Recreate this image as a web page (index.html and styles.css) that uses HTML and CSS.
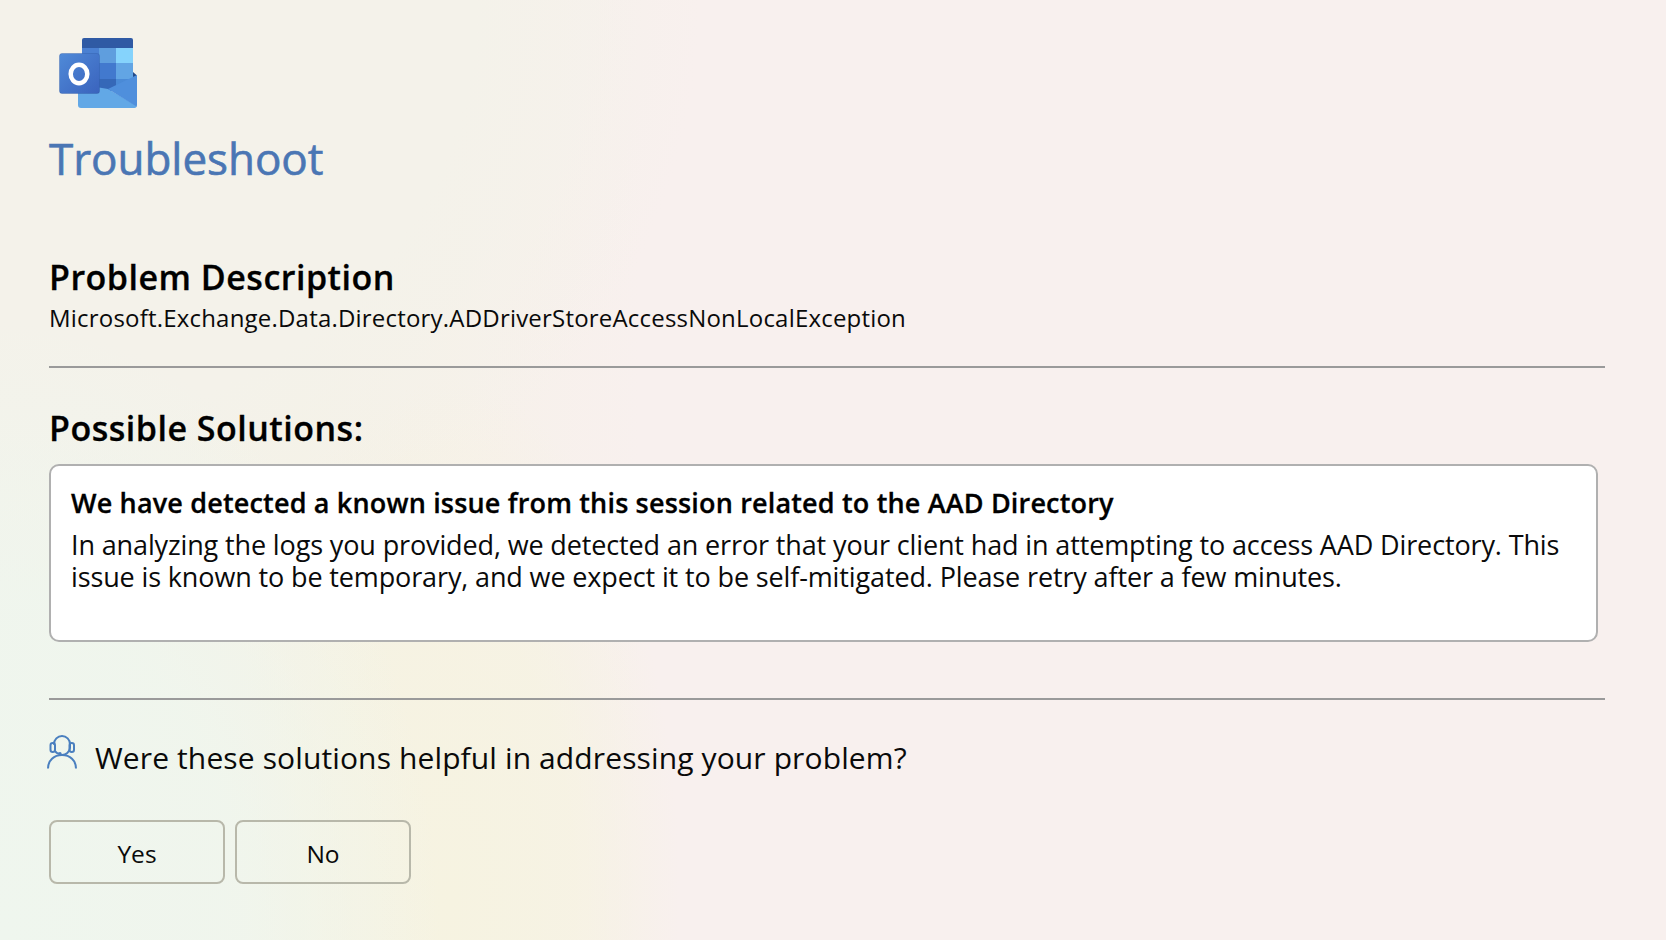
FILE: index.html
```html
<!DOCTYPE html>
<html lang="en">
<head>
<meta charset="utf-8">
<title>Troubleshoot</title>
<link rel="stylesheet" href="styles.css">
</head>
<body>
<main class="page">
  <svg class="logo" viewBox="0 0 78 70" width="78" height="70" aria-hidden="true">
    <defs>
      <linearGradient id="og" x1="0" y1="0" x2="1" y2="1"><stop offset="0" stop-color="#4f8ad8"/><stop offset="1" stop-color="#3a63bd"/></linearGradient>
    </defs>
    <path d="M23 2a2 2 0 0 1 2-2h47a2 2 0 0 1 2 2v8H23z" fill="#2f5aa4"/>
    <rect x="23" y="10" width="17" height="15" fill="#4a80d2"/>
    <rect x="40" y="10" width="17" height="15" fill="#5f9ede"/>
    <rect x="57" y="10" width="17" height="15" fill="#85d3fc"/>
    <rect x="23" y="25" width="17" height="16" fill="#3a70c4"/>
    <rect x="40" y="25" width="17" height="16" fill="#4279ce"/>
    <rect x="57" y="25" width="17" height="16" fill="#62a5e4"/>
    <rect x="23" y="41" width="17" height="12" fill="#2f60ae"/>
    <rect x="40" y="41" width="17" height="12" fill="#3568b8"/>
    <rect x="57" y="41" width="17" height="12" fill="#4a8ad6"/>
    <path d="M74 34l4 3.500-4 2.500z" fill="#234a88"/>
    <path d="M19 46v21a3 3 0 0 0 3 3h53a3 3 0 0 0 3-2L49 51z" fill="#62a8e6"/>
    <path d="M78 37v30a3 3 0 0 1-.5 1.500L49 51z" fill="#4f8fdc"/>
    <rect x=".5" y="15.500" width="40" height="40" rx="2.500" fill="url(#og)" stroke="#2f5aa4" stroke-opacity=".35"/>
    <ellipse cx="20" cy="36" rx="8.300" ry="9.200" fill="none" stroke="#fff" stroke-width="4.500"/>
  </svg>
  <h1 class="title">Troubleshoot</h1>
  <section class="problem">
    <h2 class="heading">Problem Description</h2>
    <p class="code">Microsoft.Exchange.Data.Directory.ADDriverStoreAccessNonLocalException</p>
  </section>
  <hr class="rule rule-first">
  <h2 class="heading heading-solutions">Possible Solutions:</h2>
  <div class="card">
    <h3 class="card-title">We have detected a known issue from this session related to the AAD Directory</h3>
    <p class="card-text">In analyzing the logs you provided, we detected an error that your client had in attempting to access AAD Directory. This issue is known to be temporary, and we expect it to be self-mitigated. Please retry after a few minutes.</p>
  </div>
  <hr class="rule rule-second">
  <div class="question">
    <svg class="agent" viewBox="0 0 30 34" width="30" height="34" aria-hidden="true">
      <g fill="none" stroke="#4a7fbf" stroke-width="2" stroke-linecap="round">
        <path d="M7 9a8 8 0 0 1 16 0v4a8 8 0 0 1-8 7"/>
        <rect x="3.500" y="8" width="4.500" height="9" rx="2.200"/>
        <rect x="22.500" y="8" width="4.500" height="9" rx="2.200"/>
        <path d="M8 16q2 3 5 2.800"/>
        <path d="M1 33.500c0-8 6-13.500 14-13.500s14 5.500 14 13.500" stroke-linecap="butt"/>
      </g>
      <circle cx="13" cy="18.500" r="1.600" fill="#4a7fbf"/>
    </svg>
    <p class="question-text">Were these solutions helpful in addressing your problem?</p>
  </div>
  <div class="actions">
    <button class="btn">Yes</button>
    <button class="btn">No</button>
  </div>
</main>
</body>
</html>
```
FILE: styles.css
```css
* { box-sizing: border-box; }
html, body { margin: 0; height: 100%; }
body {
  width: 1666px;
  height: 940px;
  overflow: hidden;
  font-family: "Open Sans", "Noto Sans", sans-serif;
  color: #0a0a0a;
  background:
    radial-gradient(ellipse 440px 620px at 0 940px, #eff6ee 0%, rgba(239,246,238,.8) 55%, rgba(239,246,238,0) 100%),
    radial-gradient(ellipse 230px 520px at 450px 900px, #f6f3e1 0%, rgba(246,243,225,.75) 55%, rgba(246,243,225,0) 100%),
    radial-gradient(ellipse 700px 640px at 0 0, #f4f2ea 0%, #f4f2ea 68%, rgba(244,242,234,0) 100%),
    linear-gradient(90deg, #f1f3ea 0, #f5f2e6 300px, #f8f0ee 640px);
}
.page { padding: 38px 61px 0 49px; display: flex; flex-direction: column; }
.logo { display: block; margin-left: 10px; }
.title { margin: 20px 0 0; font-size: 44px; line-height: 60px; font-weight: 400; color: #4a76b4; letter-spacing: -.05px; -webkit-text-stroke: .6px #4a76b4; }
.problem { margin-top: 67px; }
.heading { margin: 0; font-size: 34px; line-height: 44px; font-weight: 600; letter-spacing: .5px; color: #000; -webkit-text-stroke: .3px #000; }
.code { margin: 3px 0 0; font-size: 24px; line-height: 32px; letter-spacing: .2px; }
.rule { height: 2px; margin: 0; border: 0; background: #9a9a9a; }
.rule-first { margin-top: 32px; }
.heading-solutions { margin-top: 38px; }
.card { width: 1549px; height: 178px; margin-top: 14px; padding: 20px 20px; background: #fff; border: 2px solid #b0b0b0; border-radius: 10px; }
.card-title { margin: 0; font-size: 27px; line-height: 34px; font-weight: 600; letter-spacing: .17px; color: #000; -webkit-text-stroke: .3px #000; }
.card-text { margin: 9px 0 0; font-size: 27px; line-height: 32px; letter-spacing: -.13px; }
.rule-second { margin-top: 56px; }
.question { display: flex; align-items: flex-start; margin-top: 35px; margin-left: -2px; gap: 18px; }
.agent { margin-top: 0; }
.question-text { margin: 1px 0 0; font-size: 30px; line-height: 44px; letter-spacing: .12px; }
.actions { display: flex; gap: 10px; margin-top: 40px; }
.btn { width: 176px; height: 64px; padding: 3px 0 0; background: transparent; border: 2px solid #b8b8aa; border-radius: 8px; font: inherit; font-size: 24.5px; color: #0a0a0a; }
```
